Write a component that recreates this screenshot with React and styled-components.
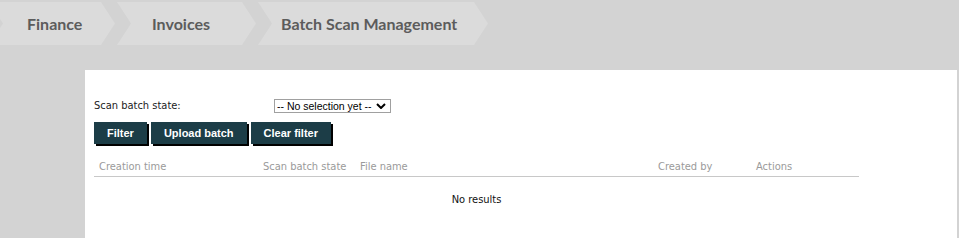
import React from "react"
import styled, { createGlobalStyle } from "styled-components"

const GlobalStyle = createGlobalStyle`
  html, body {
    margin: 0;
    padding: 0;
    background: #d3d3d3;
    overflow: hidden;
  }
`

const Page = styled.div`
  width: 959px;
  height: 238px;
  background: #d3d3d3;
  overflow: hidden;
`

const Breadcrumbs = styled.nav`
  display: flex;
  gap: 2px;
  height: 70px;
  padding-top: 2px;
  box-sizing: border-box;
  margin-left: -11px;
`

const Crumb = styled.div`
  width: ${({ $width }) => $width}px;
  height: 43px;
  box-sizing: border-box;
  padding-left: ${({ $pad }) => $pad}px;
  display: flex;
  align-items: center;
  background: #dbdbdb;
  clip-path: polygon(0 0, calc(100% - 14px) 0, 100% 50%, calc(100% - 14px) 100%, 0 100%, 14px 50%);
  font-family: Lato, "Open Sans", sans-serif;
  font-weight: 700;
  font-size: 16px;
  color: #5c5c5c;
  white-space: nowrap;
`

const Panel = styled.main`
  margin-left: 85px;
  width: 872px;
  height: 168px;
  background: #fff;
  box-sizing: border-box;
  padding: 28px 9px 0 9px;
  font-family: "DejaVu Sans Condensed", "DejaVu Sans", Verdana, sans-serif;
  font-size: 11px;
`

const FilterRow = styled.div`
  display: flex;
  align-items: center;
  height: 15px;
  margin-bottom: 9px;
`

const Label = styled.label`
  width: 180px;
  color: #222;
`

const SelectWrap = styled.div`
  position: relative;
  width: 117px;
  height: 14px;
`

const Select = styled.select`
  appearance: none;
  display: block;
  width: 100%;
  height: 100%;
  box-sizing: border-box;
  padding: 0 0 0 2px;
  border: 1px solid #a0a0a0;
  border-radius: 0;
  background: #fff;
  font-family: "Liberation Sans", Arial, sans-serif;
  font-size: 10.5px;
  line-height: 12px;
  color: #000;
  outline: none;
`

const Chevron = styled.svg`
  position: absolute;
  right: 5px;
  top: 4px;
  width: 10px;
  height: 6px;
  pointer-events: none;
`

const Buttons = styled.div`
  display: flex;
  gap: 4px;
  margin-bottom: 16px;
`

const Button = styled.button`
  height: 22px;
  padding: 0 13px;
  border: none;
  border-radius: 0;
  background: #1c3d47;
  box-shadow: 2px 2px 0 #000;
  color: #fff;
  font-family: "Liberation Sans", Arial, sans-serif;
  font-weight: 700;
  font-size: 11px;
  cursor: pointer;
`

const Table = styled.table`
  width: 765px;
  border-collapse: collapse;
  table-layout: fixed;
`

const Th = styled.th`
  width: ${({ $width }) => $width}px;
  box-sizing: border-box;
  text-align: left;
  font-weight: 400;
  color: #9a9a9a;
  padding: 0 5px 3px 5px;
  border-bottom: 1px solid #c8c8c8;
  height: 14px;
  white-space: nowrap;
`

const Empty = styled.td`
  text-align: center;
  color: #111;
  padding-top: 16px;
`

const columns = [
  { label: "Creation time", width: 164 },
  { label: "Scan batch state", width: 97 },
  { label: "File name", width: 298 },
  { label: "Created by", width: 98 },
  { label: "Actions", width: 108 },
]

export default function App() {
  return (
    <Page>
      <GlobalStyle />
      <Breadcrumbs>
        <Crumb $width={126} $pad={38}>Finance</Crumb>
        <Crumb $width={139} $pad={35}>Invoices</Crumb>
        <Crumb $width={230} $pad={23}>Batch Scan Management</Crumb>
      </Breadcrumbs>
      <Panel>
        <FilterRow>
          <Label>Scan batch state:</Label>
          <SelectWrap>
            <Select defaultValue="">
              <option value="">-- No selection yet --</option>
            </Select>
            <Chevron viewBox="0 0 10 6">
              <path d="M1 1 L5 5 L9 1" fill="none" stroke="#000" strokeWidth="2" />
            </Chevron>
          </SelectWrap>
        </FilterRow>
        <Buttons>
          <Button>Filter</Button>
          <Button>Upload batch</Button>
          <Button>Clear filter</Button>
        </Buttons>
        <Table>
          <thead>
            <tr>
              {columns.map((c) => (
                <Th key={c.label} $width={c.width}>
                  {c.label}
                </Th>
              ))}
            </tr>
          </thead>
          <tbody>
            <tr>
              <Empty colSpan={5}>No results</Empty>
            </tr>
          </tbody>
        </Table>
      </Panel>
    </Page>
  )
}
